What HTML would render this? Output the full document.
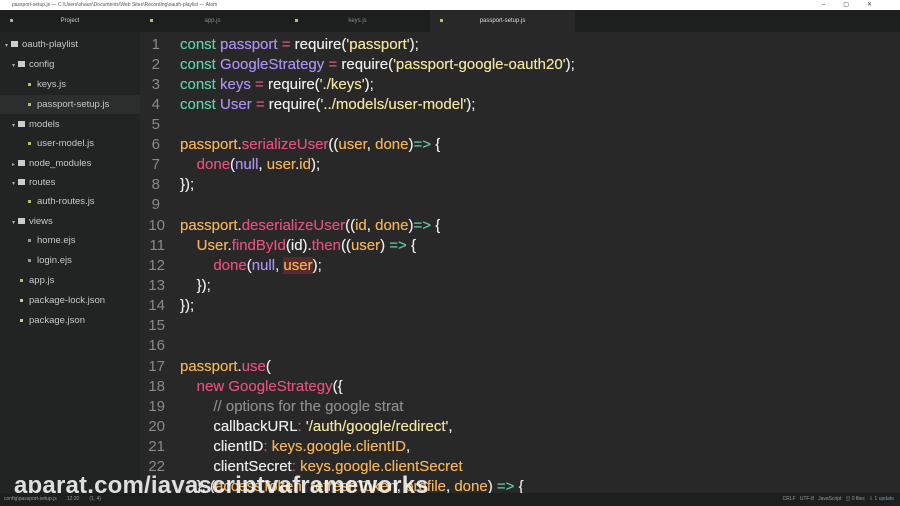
<!DOCTYPE html>
<html><head><meta charset="utf-8"><style>
*{margin:0;padding:0;box-sizing:border-box}
body{width:900px;height:506px;overflow:hidden;background:#282828;font-family:"Liberation Sans",sans-serif;position:relative}
#title{position:absolute;left:0;top:0;width:900px;height:10px;background:#fff;font-size:5px;color:#555;line-height:10px;padding-left:12px}
#title .c{position:absolute;right:10px;top:0;font-size:6px;color:#333;letter-spacing:18px}
#tabs{position:absolute;left:0;top:10px;width:900px;height:22px;background:#1d1e1e}
.tab{position:absolute;top:0;height:22px;line-height:22px;font-size:6px;color:#888;text-align:center}
.tab i{position:absolute;left:10px;top:9px;width:3px;height:3px;background:#b8c060}
#side{position:absolute;left:0;top:32px;width:140px;height:461px;background:#222323}
.r{position:absolute;height:19px;line-height:19px;font-size:9.5px;color:#c8c8c8;white-space:nowrap}
.r.sel{left:0;width:140px;background:#2c2d2d}
.f:before{content:"";display:inline-block;width:7px;height:6px;background:#ccc;margin-right:4px}
.ar{font-size:6px;color:#aaa;margin-right:3px}
.d{display:inline-block;width:3px;height:3px;background:#b8c060;margin-right:6px;vertical-align:middle}
.n{position:absolute;right:0;width:30px;text-align:right;font-size:15px;color:#8a8a8a;height:20px;line-height:24px}
.l{position:absolute;left:180px;font-size:15px;height:20px;line-height:24px;color:#ececec;white-space:pre;text-shadow:0 0 .4px currentColor}
.k{color:#5fcca8}.v{color:#a990f0}.o{color:#e0507a}.s{color:#f0e4a0}.p{color:#f2b25a}.m{color:#e0507a}.c2{color:#8a8a8a}
#status{position:absolute;left:0;top:493px;width:900px;height:13px;background:#1d1e1e;font-size:5px;color:#999;line-height:13px}
#wm{position:absolute;left:14px;top:472px;font-size:24px;font-weight:bold;color:rgba(255,255,255,.85);letter-spacing:.2px}
</style></head><body>
<div id="title">passport-setup.js — C:\Users\shaun\Documents\Web Sites\Recording\oauth-playlist — Atom<span class="c">–▢✕</span></div>
<div id="tabs">
<div class="tab" style="left:0;width:140px;color:#ccc"><i style="background:#aaa"></i>Project</div>
<div class="tab" style="left:140px;width:145px"><i></i>app.js</div>
<div class="tab" style="left:285px;width:145px"><i></i>keys.js</div>
<div class="tab" style="left:430px;width:145px;background:#282828;color:#ddd"><i></i>passport-setup.js</div>
</div>
<div id="side">
<div class="r" style="top:3px;left:5px"><span class="ar">▾</span><span class="f"></span>oauth-playlist</div>
<div class="r" style="top:23px;left:12px"><span class="ar">▾</span><span class="f"></span>config</div>
<div class="r" style="top:43px;left:28px"><span class="d"></span>keys.js</div>
<div class="r sel" style="top:63px"><span style="padding-left:28px"><span class="d"></span>passport-setup.js</span></div>
<div class="r" style="top:83px;left:12px"><span class="ar">▾</span><span class="f"></span>models</div>
<div class="r" style="top:102px;left:28px"><span class="d"></span>user-model.js</div>
<div class="r" style="top:122px;left:12px"><span class="ar">▸</span><span class="f"></span>node_modules</div>
<div class="r" style="top:141px;left:12px"><span class="ar">▾</span><span class="f"></span>routes</div>
<div class="r" style="top:160px;left:28px"><span class="d"></span>auth-routes.js</div>
<div class="r" style="top:180px;left:12px"><span class="ar">▾</span><span class="f"></span>views</div>
<div class="r" style="top:199px;left:28px"><span class="d" style="background:#999"></span>home.ejs</div>
<div class="r" style="top:219px;left:28px"><span class="d" style="background:#999"></span>login.ejs</div>
<div class="r" style="top:239px;left:20px"><span class="d"></span>app.js</div>
<div class="r" style="top:259px;left:20px"><span class="d" style="background:#cc9"></span>package-lock.json</div>
<div class="r" style="top:279px;left:20px"><span class="d" style="background:#cc9"></span>package.json</div>
</div>
<div class="n" style="left:130px;top:33px">1</div><div class="n" style="left:130px;top:53px">2</div><div class="n" style="left:130px;top:73px">3</div><div class="n" style="left:130px;top:93px">4</div><div class="n" style="left:130px;top:113px">5</div><div class="n" style="left:130px;top:133px">6</div><div class="n" style="left:130px;top:153px">7</div><div class="n" style="left:130px;top:173px">8</div><div class="n" style="left:130px;top:193px">9</div><div class="n" style="left:135px;top:214px">10</div><div class="n" style="left:135px;top:234px">11</div><div class="n" style="left:135px;top:254px">12</div><div class="n" style="left:135px;top:274px">13</div><div class="n" style="left:135px;top:294px">14</div><div class="n" style="left:135px;top:314px">15</div><div class="n" style="left:135px;top:334px">16</div><div class="n" style="left:135px;top:355px">17</div><div class="n" style="left:135px;top:375px">18</div><div class="n" style="left:135px;top:395px">19</div><div class="n" style="left:135px;top:415px">20</div><div class="n" style="left:135px;top:435px">21</div><div class="n" style="left:135px;top:455px">22</div>
<div class="l" style="top:33px"><span class="k">const</span> <span class="v">passport</span> <span class="o">=</span> require(<span class="s">'passport'</span>);</div>
<div class="l" style="top:53px"><span class="k">const</span> <span class="v">GoogleStrategy</span> <span class="o">=</span> require(<span class="s">'passport-google-oauth20'</span>);</div>
<div class="l" style="top:73px"><span class="k">const</span> <span class="v">keys</span> <span class="o">=</span> require(<span class="s">'./keys'</span>);</div>
<div class="l" style="top:93px"><span class="k">const</span> <span class="v">User</span> <span class="o">=</span> require(<span class="s">'../models/user-model'</span>);</div>
<div class="l" style="top:133px"><span class="p">passport</span>.<span class="m">serializeUser</span>((<span class="p">user</span>, <span class="p">done</span>)<span class="k">=&gt;</span> {</div>
<div class="l" style="top:153px">    <span class="m">done</span>(<span class="v">null</span>, <span class="p">user</span>.<span class="p">id</span>);</div>
<div class="l" style="top:173px">});</div>
<div class="l" style="top:214px"><span class="p">passport</span>.<span class="m">deserializeUser</span>((<span class="p">id</span>, <span class="p">done</span>)<span class="k">=&gt;</span> {</div>
<div class="l" style="top:234px">    <span class="p">User</span>.<span class="m">findById</span>(id).<span class="m">then</span>((<span class="p">user</span>) <span class="k">=&gt;</span> {</div>
<div class="l" style="top:254px">        <span class="m">done</span>(<span class="v">null</span>, <span class="p" style="background:#5a2a2a">user</span>);</div>
<div class="l" style="top:274px">    });</div>
<div class="l" style="top:294px">});</div>
<div class="l" style="top:355px"><span class="p">passport</span>.<span class="m">use</span>(</div>
<div class="l" style="top:375px">    <span class="m">new</span> <span class="m">GoogleStrategy</span>({</div>
<div class="l" style="top:395px">        <span class="c2">// options for the google strat</span></div>
<div class="l" style="top:415px">        callbackURL<span class="o">:</span> <span class="s">'/auth/google/redirect'</span>,</div>
<div class="l" style="top:435px">        clientID<span class="o">:</span> <span class="p">keys.google.clientID</span>,</div>
<div class="l" style="top:455px">        clientSecret<span class="o">:</span> <span class="p">keys.google.clientSecret</span></div>
<div class="l" style="top:475px">    }, (<span class="p">accessToken</span>, <span class="p">refreshToken</span>, <span class="p">profile</span>, <span class="p">done</span>) <span class="k">=&gt;</span> {</div>
<div id="wm">aparat.com/javascriptvaframeworks</div>
<div id="status"><span style="margin-left:4px">config\passport-setup.js</span><span style="margin-left:10px">12:20</span><span style="margin-left:10px">(1, 4)</span>
<span style="position:absolute;right:6px">CRLF &nbsp; UTF-8 &nbsp; JavaScript &nbsp; ◫ 0 files &nbsp; <span style="color:#79a">⇩ 1 update</span></span></div>
</body></html>
